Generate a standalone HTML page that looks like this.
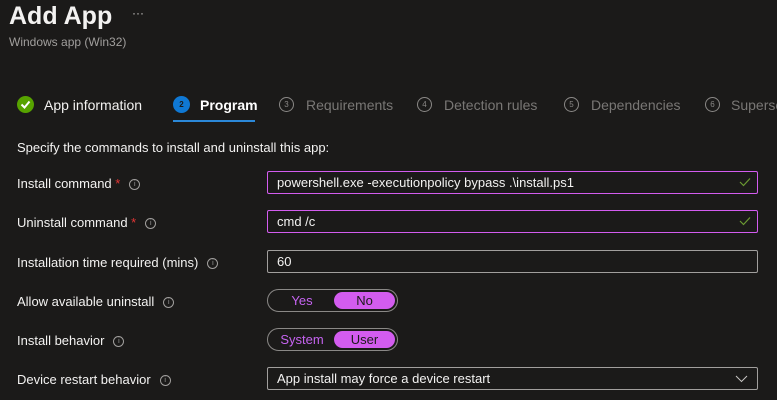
<!DOCTYPE html>
<html><head><style>
html{overflow:hidden}
body{margin:0;width:777px;height:400px;background:#1b1a19;overflow:hidden;font-family:"Liberation Sans",sans-serif;color:#f3f2f1;position:relative}
.a{position:absolute;white-space:nowrap}
.t{font-size:13px}
.c{position:absolute;width:15px;height:15px;border-radius:50%;border:1px solid #8a8886;box-sizing:border-box;font-size:8px;text-align:center;line-height:13px;color:#8a8886}
.tab{font-size:14px;color:#797775}
.i{display:inline-block;width:11px;height:11px;border:1px solid #a19f9d;border-radius:50%;font-size:7px;line-height:10px;text-align:center;color:#a19f9d;vertical-align:middle;margin-left:9px;box-sizing:border-box}
.req{color:#e43535}
.inp{position:absolute;left:267px;width:491px;height:23px;box-sizing:border-box;border:1px solid #a19f9d;border-radius:2px;padding-left:9px;font-size:13px;line-height:21px}
.mg{border:1px solid #d35cef}
.chk{position:absolute;right:6px;top:5px}
.tg{position:absolute;left:267px;width:131px;height:23px;border:1px solid #8a8886;border-radius:12px;box-sizing:border-box;font-size:13px}
.tg span{position:absolute;top:2px;height:17px;line-height:17px;text-align:center;border-radius:9px}
#clip{position:absolute;left:0;top:0;width:777px;height:400px;overflow:hidden}
</style></head><body><div id="clip">
<div class="a" style="left:9px;top:2px;font-size:25px;font-weight:bold">Add App</div>
<div class="a" style="left:132px;top:6px;font-size:12px;color:#c8c6c4">···</div>
<div class="a" style="left:9px;top:35px;font-size:12px;color:#a19f9d">Windows app (Win32)</div>

<div class="a" style="left:17px;top:96px;width:17px;height:17px;border-radius:50%;background:#57a300"><svg width="17" height="17"><path d="M4.5 8.5l3 3 5-6" stroke="#fff" stroke-width="2" fill="none"/></svg></div>
<div class="a tab" style="left:44px;top:97px;color:#f3f2f1">App information</div>
<div class="a" style="left:173px;top:96px;width:17px;height:17px;border-radius:50%;background:#0f78d4;font-size:8px;text-align:center;line-height:17px;font-weight:bold;color:#1b1a19">2</div>
<div class="a tab" style="left:200px;top:97px;color:#fff;font-weight:bold">Program</div>
<div class="a" style="left:173px;top:120px;width:82px;height:2px;background:#2b88d8"></div>
<div class="c" style="left:279px;top:97px">3</div><div class="a tab" style="left:306px;top:97px">Requirements</div>
<div class="c" style="left:417px;top:97px">4</div><div class="a tab" style="left:444px;top:97px">Detection rules</div>
<div class="c" style="left:564px;top:97px">5</div><div class="a tab" style="left:591px;top:97px">Dependencies</div>
<div class="c" style="left:705px;top:97px">6</div><div class="a tab" style="left:731px;top:97px">Supersedence</div>

<div class="a t" style="left:17px;top:140px">Specify the commands to install and uninstall this app:</div>

<div class="a t" style="left:17px;top:176px">Install command <span class="req">*</span><span class="i">i</span></div>
<div class="inp mg" style="top:171px">powershell.exe -executionpolicy bypass .\install.ps1<svg class="chk" width="12" height="10"><path d="M1 5l3.5 3.5L11 1.5" stroke="#6b9a32" stroke-width="1.2" fill="none"/></svg></div>
<div class="a t" style="left:17px;top:215px">Uninstall command <span class="req">*</span><span class="i">i</span></div>
<div class="inp mg" style="top:210px">cmd /c<svg class="chk" width="12" height="10"><path d="M1 5l3.5 3.5L11 1.5" stroke="#6b9a32" stroke-width="1.2" fill="none"/></svg></div>
<div class="a t" style="left:17px;top:255px">Installation time required (mins)<span class="i">i</span></div>
<div class="inp" style="top:250px">60</div>
<div class="a t" style="left:17px;top:294px">Allow available uninstall<span class="i">i</span></div>
<div class="tg" style="top:289px"><span style="left:3px;width:62px;color:#c563f0">Yes</span><span style="left:66px;width:61px;background:#d35cef;color:#1b1a19">No</span></div>
<div class="a t" style="left:17px;top:333px">Install behavior<span class="i">i</span></div>
<div class="tg" style="top:328px"><span style="left:3px;width:62px;color:#c563f0">System</span><span style="left:66px;width:61px;background:#d35cef;color:#1b1a19">User</span></div>
<div class="a t" style="left:17px;top:372px">Device restart behavior<span class="i">i</span></div>
<div class="inp" style="top:367px">App install may force a device restart<svg class="chk" style="right:9px;top:7px" width="13" height="8"><path d="M1 1l5.5 5.5L12 1" stroke="#c8c6c4" stroke-width="1" fill="none"/></svg></div>
</div></body></html>
